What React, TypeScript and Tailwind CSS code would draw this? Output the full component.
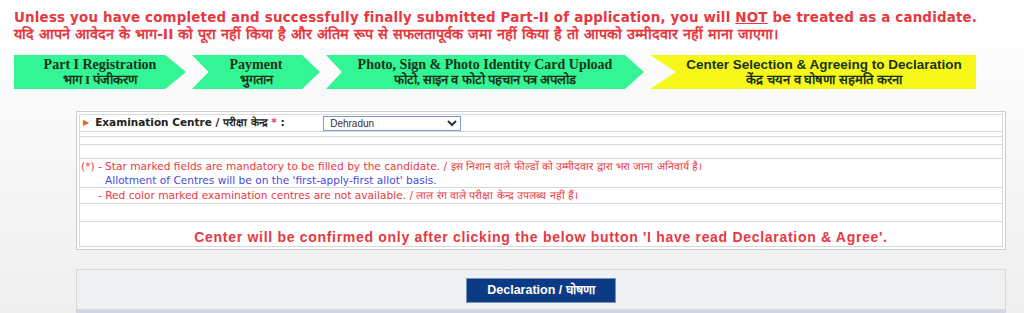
import React from "react";

const steps = [
  {
    en: "Part I Registration",
    hi: "भाग I पंजीकरण",
    w: "w-[172px]",
    clip: "[clip-path:polygon(0_0,88%_0,100%_50%,88%_100%,0_100%)]",
    bg: "bg-[#33f595]",
    font: "font-['Liberation_Serif',serif] text-[14px]",
  },
  {
    en: "Payment",
    hi: "भुगतान",
    w: "w-[128px]",
    clip: "[clip-path:polygon(0_0,86%_0,100%_50%,86%_100%,0_100%,13%_50%)]",
    bg: "bg-[#33f595]",
    font: "font-['Liberation_Serif',serif] text-[14px]",
  },
  {
    en: "Photo, Sign & Photo Identity Card Upload",
    hi: "फोटो, साइन व फोटो पहचान पत्र अपलोड",
    w: "w-[318px]",
    clip: "[clip-path:polygon(0_0,94%_0,100%_50%,94%_100%,0_100%,5%_50%)]",
    bg: "bg-[#33f595]",
    font: "font-['Liberation_Serif',serif] text-[14px]",
  },
  {
    en: "Center Selection & Agreeing to Declaration",
    hi: "केंद्र चयन व घोषणा सहमति करना",
    w: "w-[326px]",
    clip: "[clip-path:polygon(0_0,100%_0,100%_100%,0_100%,8%_50%)] pl-[22px]",
    bg: "bg-[#f7f71a]",
    font: "font-['Liberation_Sans',sans-serif] text-[13.5px]",
  },
];

export default function App() {
  return (
    <div className="min-h-[313px] w-[1024px] overflow-hidden bg-gradient-to-b from-white to-[#efefef] font-['DejaVu_Sans',sans-serif]">
      {/* warning */}
      <div className="px-[14px] pt-[9px] pb-[5px]">
        <p className="text-[13.4px] font-bold leading-[17px] text-[#e8383f] tracking-[0.2px]">
          Unless you have completed and successfully finally submitted Part-II of application, you will{" "}
          <span className="underline">NOT</span> be treated as a candidate.
        </p>
        <p className="text-[14.3px] font-bold leading-[16px] text-[#e8383f]">
          यदि आपने आवेदन के भाग-II को पूरा नहीं किया है और अंतिम रूप से सफलतापूर्वक जमा नहीं किया है तो आपको उम्मीदवार नहीं माना जाएगा।
        </p>
      </div>

      {/* progress steps */}
      <div className="flex gap-[6px] px-[14px] pt-[8px]">
        {steps.map((s) => (
          <div
            key={s.en}
            className={`${s.w} ${s.clip} ${s.bg} ${s.font} flex h-[34px] flex-col items-center justify-center font-bold leading-[15px] text-[#183418]`}
          >
            <span>{s.en}</span>
            <span className="text-[13px]">{s.hi}</span>
          </div>
        ))}
      </div>

      {/* form box */}
      <div className="ml-[76px] mt-[22px] w-[930px] border border-[#c9ccd1] bg-white p-[2px]">
        <div className="border border-[#d6d8db]">
          <div className="flex h-[17px] items-center border-b border-[#d6d8db]">
            <span className="ml-[3px] mr-[6px] text-[8px] text-[#e06a1b]">▶</span>
            <span className="w-[228px] text-[10.5px] font-bold text-[#222]">
              Examination Centre / परीक्षा केन्द्र <span className="text-[#e8383f]">*</span> :
            </span>
            <select className="h-[15px] w-[138px] border border-[#7a9cd3] bg-white px-[2px] text-[10px] font-['Liberation_Sans',sans-serif] text-[#333]">
              <option>Dehradun</option>
            </select>
          </div>
          <div className="h-[5px] border-b border-[#d6d8db]" />
          <div className="h-[8px] border-b border-[#d6d8db]" />
          <div className="h-[14px] border-b border-[#d6d8db]" />
          <div className="flex h-[29px] flex-col justify-center border-b border-[#d6d8db] pl-[1px] text-[10.6px] leading-[14px]">
            <span className="text-[#e8383f]">
              (*) - Star marked fields are mandatory to be filled by the candidate. / इस निशान वाले फील्डों को उम्मीदवार द्वारा भरा जाना अनिवार्य है।
            </span>
            <span className="pl-[24px] text-[#4a4ae0]">
              Allotment of Centres will be on the 'first-apply-first allot' basis.
            </span>
          </div>
          <div className="flex h-[16px] items-center border-b border-[#d6d8db] pl-[18px] text-[10.6px] text-[#e8383f]">
            - Red color marked examination centres are not available. / लाल रंग वाले परीक्षा केन्द्र उपलब्ध नहीं हैं।
          </div>
          <div className="h-[18px] border-b border-[#d6d8db]" />
          <div className="h-[24px] pt-[7px] text-center font-['Liberation_Sans',sans-serif] text-[14px] font-bold leading-[16px] tracking-[0.7px] text-[#e8383f]">
            Center will be confirmed only after clicking the below button 'I have read Declaration &amp; Agree'.
          </div>
        </div>
      </div>

      {/* declaration */}
      <div className="ml-[76px] mt-[19px] h-[50px] w-[930px] border border-[#d6d8db] bg-[#eef0f2]">
        <div className="flex justify-center pt-[8px]">
          <button className="h-[25px] w-[150px] border border-[#7f93b8] bg-[#0d3a84] font-['Liberation_Sans',sans-serif] text-[12.5px] font-bold text-white">
            Declaration / घोषणा
          </button>
        </div>
        <div className="mt-[6px] h-[10px] bg-[#d3d8e0]" />
      </div>
    </div>
  );
}
